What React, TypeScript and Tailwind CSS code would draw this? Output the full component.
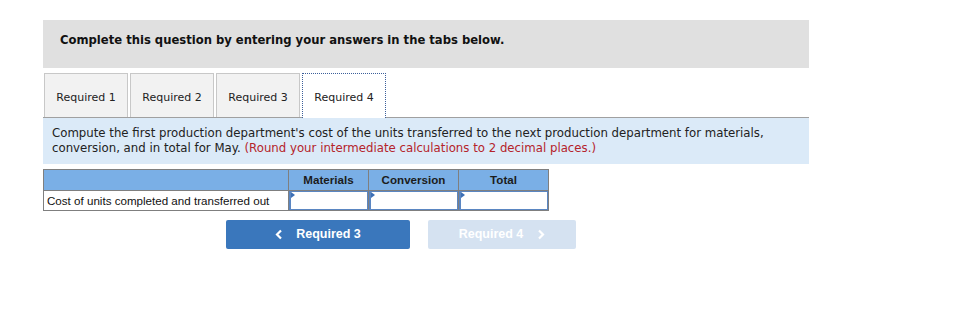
import React from "react";

const verdana = { fontFamily: '"DejaVu Sans", Verdana, sans-serif' };
const arial = { fontFamily: '"Liberation Sans", Arial, sans-serif' };

function Tab({ label, active }: { label: string; active?: boolean }) {
  return (
    <div
      className={
        "w-[84px] flex items-center justify-center pt-[5px] text-[11px] text-[#222] " +
        (active
          ? "bg-white border border-dotted border-[#3c5f9a] border-b-0 h-[45px] -mb-px"
          : "bg-[#f2f2f2] border border-[#c8c8c8] border-b-0 h-[44px]")
      }
      style={verdana}
    >
      {label}
    </div>
  );
}

function InputCell() {
  return (
    <td className="p-0 border border-[#7f7f7f]">
      <div className="relative h-[19px] bg-white border border-[#5a86c2] border-l-2">
        <div className="absolute left-0 top-0 w-0 h-0 border-t-[3px] border-b-[3px] border-l-[4px] border-t-transparent border-b-transparent border-l-[#3d6fb5]" />
      </div>
    </td>
  );
}

export default function App() {
  return (
    <div className="w-[957px] h-[326px] bg-white pt-[20px] pl-[43px]">
      <div className="w-[766px]">
        <div
          className="h-[48px] bg-[#e0e0e0] px-[17px] pt-[12px] text-[11.6px] leading-[16px] font-bold text-[#111]"
          style={verdana}
        >
          Complete this question by entering your answers in the tabs below.
        </div>

        <div className="mt-[5px] flex gap-[2px] pl-[1px] border-b border-[#a0a0a0] items-end">
          <Tab label="Required 1" />
          <Tab label="Required 2" />
          <Tab label="Required 3" />
          <Tab label="Required 4" active />
        </div>

        <div
          className="bg-[#dbeaf8] h-[46px] px-[9px] pt-[8px] text-[11.75px] leading-[15px] text-[#222]"
          style={verdana}
        >
          <p>Compute the first production department's cost of the units transferred to the next production department for materials,</p>
          <p>
            conversion, and in total for May.{" "}
            <span className="text-[#b5242b]">(Round your intermediate calculations to 2 decimal places.)</span>
          </p>
        </div>

        <table className="mt-[5px] border-collapse text-[11.6px]" style={arial}>
          <thead>
            <tr className="bg-[#7aafe6] h-[21px]">
              <th className="w-[245px] border border-[#7f7f7f]"></th>
              <th className="w-[80px] border border-[#7f7f7f] font-bold text-[#1c1c1c]">Materials</th>
              <th className="w-[90px] border border-[#7f7f7f] font-bold text-[#1c1c1c]">Conversion</th>
              <th className="w-[90px] border border-[#7f7f7f] font-bold text-[#1c1c1c]">Total</th>
            </tr>
          </thead>
          <tbody>
            <tr className="h-[20px]">
              <td className="border border-[#7f7f7f] px-[3px] text-[#111] leading-[18px]">
                Cost of units completed and transferred out
              </td>
              <InputCell />
              <InputCell />
              <InputCell />
            </tr>
          </tbody>
        </table>

        <div className="mt-[9px] flex pl-[183px] gap-[18px]" style={arial}>
          <div className="w-[184px] h-[29px] bg-[#3a77bc] rounded-[2px] flex items-center justify-center gap-[13px] text-white font-bold text-[12.5px]">
            <svg width="8" height="11" viewBox="0 0 8 11" fill="none">
              <path d="M6 1.5 L2 5.5 L6 9.5" stroke="white" strokeWidth="2.2" />
            </svg>
            <span>Required 3</span>
          </div>
          <div className="w-[148px] h-[29px] bg-[#d5e2f1] rounded-[2px] flex items-center justify-center gap-[14px] text-white font-bold text-[12.5px]">
            <span>Required 4</span>
            <svg width="8" height="11" viewBox="0 0 8 11" fill="none">
              <path d="M2 1.5 L6 5.5 L2 9.5" stroke="white" strokeWidth="2.2" />
            </svg>
          </div>
        </div>
      </div>
    </div>
  );
}
